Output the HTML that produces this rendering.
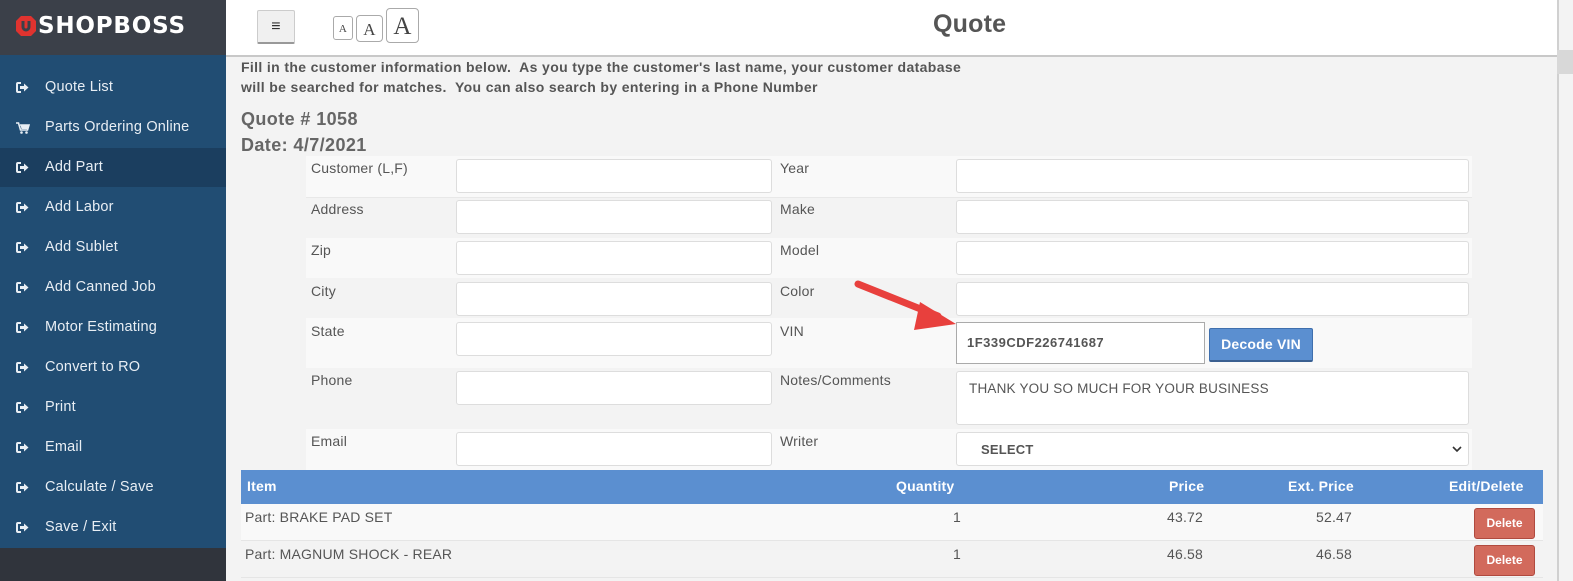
<!DOCTYPE html>
<html><head><style>
*{box-sizing:border-box;margin:0;padding:0}
body{width:1573px;height:581px;overflow:hidden;background:#f3f3f3;font-family:"Liberation Sans",sans-serif;color:#555;position:relative;font-size:14px;letter-spacing:0.2px}
.a{position:absolute}
.side{left:0;top:0;width:226px;height:581px;background:#30343c}
.logo{left:0;top:0;width:226px;height:55px;background:#3b4049}
.nav{left:0;top:55px;width:226px;height:493px;background:#214d73}
.ni{left:0;width:226px;height:39px;color:#e8eef4;font-size:14.5px;line-height:39px;padding-left:45px}
.ni svg{position:absolute;left:16px;top:14px}
.top{left:226px;top:0;width:1332px;height:57px;background:#fff;border-bottom:2px solid #c8c8c8}
.rs{left:1557px;top:0;width:16px;height:581px;background:#f3f3f3;border-left:2px solid #d0d0d0}
.fr{left:306px;width:1166px}
.lb{font-size:14px;color:#555}
.in{background:#fff;border:1px solid #ddd;border-radius:3px;height:34px}
.th{color:#fff;font-weight:bold;font-size:14px;top:478px}
.del{width:61px;height:31px;background:#d26a5c;border:1px solid #b04a3f;border-radius:3px;color:#fff;font-size:12px;font-weight:bold;text-align:center;line-height:29px;letter-spacing:0}
</style></head><body>
<div class="a side"></div>
<div class="a logo"><svg class="a" style="left:15px;top:15px" width="22" height="22" viewBox="0 0 22 22"><path d="M6 1h10l5 5v10l-5 5H6l-5-5V6z" fill="#e0332f"/><path d="M8 6v6a3 3 0 0 0 6 0V6" stroke="#3b4049" stroke-width="3" fill="none"/></svg><div class="a" style="left:38px;top:13px;color:#fff;font-weight:900;font-size:23px;letter-spacing:0.8px;font-family:'DejaVu Sans',sans-serif">SHOPBOSS</div></div>
<div class="a nav"></div>
<div class="a" style="left:0;top:148px;width:226px;height:39px;background:#1b3e5f"></div>
<svg width="0" height="0" style="position:absolute"><defs><g id="si"><path d="M5 1H2a1 1 0 0 0-1 1v7a1 1 0 0 0 1 1h3" stroke="#e8eef4" stroke-width="2" fill="none"/><path d="M4 4h4V1.5l4.5 4-4.5 4V7H4z" fill="#e8eef4"/></g></defs></svg>
<div class="a ni" style="top:68px"><svg width="13" height="11"><use href="#si"/></svg>Quote List</div>
<div class="a ni" style="top:108px"><svg width="14" height="12" viewBox="0 0 14 12"><path d="M0 1h2.5l2 7h7l1.5-5H4" stroke="#e8eef4" stroke-width="1.6" fill="none"/><path d="M4.5 3h8l-1.2 4H5.5z" fill="#e8eef4"/><circle cx="5.5" cy="10.5" r="1.3" fill="#e8eef4"/><circle cx="10.5" cy="10.5" r="1.3" fill="#e8eef4"/></svg>Parts Ordering Online</div>
<div class="a ni" style="top:148px"><svg width="13" height="11"><use href="#si"/></svg>Add Part</div>
<div class="a ni" style="top:188px"><svg width="13" height="11"><use href="#si"/></svg>Add Labor</div>
<div class="a ni" style="top:228px"><svg width="13" height="11"><use href="#si"/></svg>Add Sublet</div>
<div class="a ni" style="top:268px"><svg width="13" height="11"><use href="#si"/></svg>Add Canned Job</div>
<div class="a ni" style="top:308px"><svg width="13" height="11"><use href="#si"/></svg>Motor Estimating</div>
<div class="a ni" style="top:348px"><svg width="13" height="11"><use href="#si"/></svg>Convert to RO</div>
<div class="a ni" style="top:388px"><svg width="13" height="11"><use href="#si"/></svg>Print</div>
<div class="a ni" style="top:428px"><svg width="13" height="11"><use href="#si"/></svg>Email</div>
<div class="a ni" style="top:468px"><svg width="13" height="11"><use href="#si"/></svg>Calculate / Save</div>
<div class="a ni" style="top:508px"><svg width="13" height="11"><use href="#si"/></svg>Save / Exit</div>

<div class="a top"></div>
<div class="a" style="left:257px;top:10px;width:38px;height:34px;background:#f0f0f0;border:1px solid #ccc;border-bottom:2px solid #999;border-radius:2px;text-align:center;line-height:32px;font-size:16px;color:#333">≡</div>
<div class="a" style="left:333px;top:16px;width:20px;height:24px;border:1px solid #aaa;border-radius:3px;font-family:'Liberation Serif',serif;font-size:11px;text-align:center;line-height:24px;color:#444">A</div>
<div class="a" style="left:356px;top:15px;width:27px;height:27px;border:1px solid #aaa;border-radius:4px;font-family:'Liberation Serif',serif;font-size:17px;text-align:center;line-height:27px;color:#444">A</div>
<div class="a" style="left:386px;top:8px;width:33px;height:35px;border:1px solid #aaa;border-radius:4px;font-family:'Liberation Serif',serif;font-size:25px;text-align:center;line-height:35px;color:#444">A</div>
<div class="a" style="left:933px;top:10px;font-size:25px;font-weight:bold;color:#555">Quote</div>
<div class="a rs"></div>
<div class="a" style="left:1557px;top:50px;width:16px;height:24px;background:#d8d8d8"></div>

<div class="a" style="left:241px;top:57px;font-size:14px;font-weight:bold;line-height:20px;color:#555;letter-spacing:0.36px">Fill in the customer information below.&nbsp; As you type the customer's last name, your customer database<br>will be searched for matches.&nbsp; You can also search by entering in a Phone Number</div>
<div class="a" style="left:241px;top:106px;font-size:18px;font-weight:bold;line-height:26px;color:#666;letter-spacing:0.4px">Quote # 1058<br>Date: 4/7/2021</div>

<div class="a fr" style="top:156px;height:41px;background:#f9f9f9"></div>
<div class="a fr" style="top:197px;height:41px;background:#f3f3f3"></div>
<div class="a fr" style="top:238px;height:40px;background:#f9f9f9"></div>
<div class="a fr" style="top:278px;height:40px;background:#f3f3f3"></div>
<div class="a fr" style="top:318px;height:50px;background:#f9f9f9"></div>
<div class="a fr" style="top:368px;height:61px;background:#f3f3f3"></div>
<div class="a fr" style="top:429px;height:41px;background:#f9f9f9"></div>
<div class="a" style="left:306px;top:197px;width:1166px;border-top:1px solid #e8e8e8"></div>

<div class="a lb" style="left:311px;top:160px">Customer (L,F)</div>
<div class="a lb" style="left:311px;top:201px">Address</div>
<div class="a lb" style="left:311px;top:242px">Zip</div>
<div class="a lb" style="left:311px;top:283px">City</div>
<div class="a lb" style="left:311px;top:323px">State</div>
<div class="a lb" style="left:311px;top:372px">Phone</div>
<div class="a lb" style="left:311px;top:433px">Email</div>
<div class="a lb" style="left:780px;top:160px">Year</div>
<div class="a lb" style="left:780px;top:201px">Make</div>
<div class="a lb" style="left:780px;top:242px">Model</div>
<div class="a lb" style="left:780px;top:283px">Color</div>
<div class="a lb" style="left:780px;top:323px">VIN</div>
<div class="a lb" style="left:780px;top:372px">Notes/Comments</div>
<div class="a lb" style="left:780px;top:433px">Writer</div>

<div class="a in" style="left:456px;top:159px;width:316px"></div>
<div class="a in" style="left:456px;top:200px;width:316px"></div>
<div class="a in" style="left:456px;top:241px;width:316px"></div>
<div class="a in" style="left:456px;top:282px;width:316px"></div>
<div class="a in" style="left:456px;top:322px;width:316px"></div>
<div class="a in" style="left:456px;top:371px;width:316px"></div>
<div class="a in" style="left:456px;top:432px;width:316px"></div>
<div class="a in" style="left:956px;top:159px;width:513px"></div>
<div class="a in" style="left:956px;top:200px;width:513px"></div>
<div class="a in" style="left:956px;top:241px;width:513px"></div>
<div class="a in" style="left:956px;top:282px;width:513px"></div>
<div class="a" style="left:956px;top:322px;width:249px;height:42px;background:#fff;border:1px solid #aaa;font-size:13px;font-weight:bold;padding:12px 10px;color:#555;letter-spacing:0.5px">1F339CDF226741687</div>
<div class="a" style="left:1209px;top:328px;width:104px;height:34px;background:#5b8fd0;border:1px solid #3f6fad;border-bottom:2px solid #3a5f90;border-radius:2px;color:#fff;font-weight:bold;font-size:14px;text-align:center;line-height:31px">Decode VIN</div>
<div class="a in" style="left:956px;top:371px;width:513px;height:54px;font-size:13.5px;padding:9px 12px;color:#555">THANK YOU SO MUCH FOR YOUR BUSINESS</div>
<div class="a in" style="left:956px;top:432px;width:513px;font-size:13px;font-weight:bold;padding:9px 24px;color:#555">SELECT<svg class="a" style="right:6px;top:13px" width="10" height="7"><path d="M1 1l4 4 4-4" stroke="#333" stroke-width="1.6" fill="none"/></svg></div>

<svg class="a" style="left:850px;top:276px" width="110" height="55"><path d="M8 8 L88 40" stroke="#e8403d" stroke-width="7" stroke-linecap="round"/><path d="M70 26 L106 48 L64 54 Z" fill="#e8403d"/></svg>

<div class="a" style="left:241px;top:470px;width:1302px;height:34px;background:#5b8fd0"></div>
<div class="a th" style="left:247px">Item</div>
<div class="a th" style="left:896px">Quantity</div>
<div class="a th" style="left:1169px">Price</div>
<div class="a th" style="left:1288px">Ext. Price</div>
<div class="a th" style="left:1449px">Edit/Delete</div>
<div class="a" style="left:241px;top:504px;width:1302px;height:37px;background:#f9f9f9;border-bottom:1px solid #e5e5e5"></div>
<div class="a" style="left:241px;top:541px;width:1302px;height:37px;background:#f3f3f3;border-bottom:1px solid #e5e5e5"></div>
<div class="a" style="left:245px;top:509px">Part: BRAKE PAD SET</div>
<div class="a" style="left:953px;top:509px">1</div>
<div class="a" style="left:1167px;top:509px">43.72</div>
<div class="a" style="left:1316px;top:509px">52.47</div>
<div class="a del" style="left:1474px;top:508px">Delete</div>
<div class="a" style="left:245px;top:546px">Part: MAGNUM SHOCK - REAR</div>
<div class="a" style="left:953px;top:546px">1</div>
<div class="a" style="left:1167px;top:546px">46.58</div>
<div class="a" style="left:1316px;top:546px">46.58</div>
<div class="a del" style="left:1474px;top:545px">Delete</div>
</body></html>
